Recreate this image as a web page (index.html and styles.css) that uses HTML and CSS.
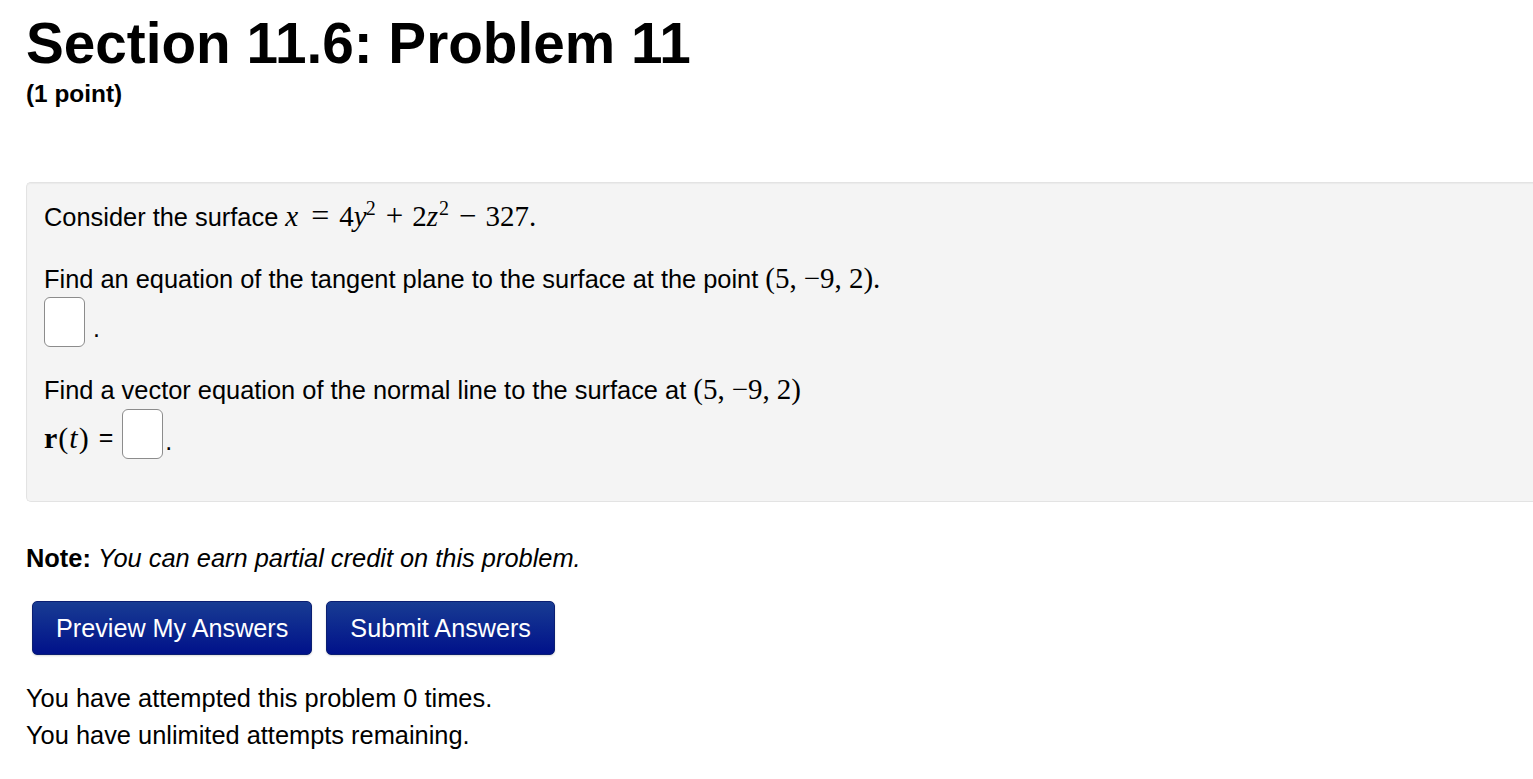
FILE: index.html
```html
<!DOCTYPE html>
<html lang="en">
<head>
<meta charset="utf-8">
<title>Section 11.6: Problem 11</title>
<link rel="stylesheet" href="styles.css">
</head>
<body>
<div class="page">
  <h1 class="title">Section 11.6: Problem 11</h1>
  <div class="points">(1 point)</div>

  <div class="problem">
    <p class="line">Consider the surface <span class="m"><i class="vx">x</i><span class="rel">=</span>4<i>y</i><span class="sup">2</span><span class="bin">+</span>2<i>z</i><span class="sup supz">2</span><span class="bin">−</span>327.</span></p>
    <p class="line gap">Find an equation of the tangent plane to the surface at the point <span class="m">(5,<span class="th"></span>−9,<span class="th"></span>2).</span></p>
    <div class="answer-row first">
      <span class="ans"></span><span class="dot">.</span>
    </div>
    <p class="line gap">Find a vector equation of the normal line to the surface at <span class="m">(5,<span class="th"></span>−9,<span class="th"></span>2)</span></p>
    <div class="answer-row second">
      <span class="m rt"><b>r</b>(<i>t</i>)</span><span class="eq">=</span><span class="ans"></span><span class="dot2">.</span>
    </div>
  </div>

  <p class="note"><b>Note:</b> <i>You can earn partial credit on this problem.</i></p>

  <div class="buttons">
    <button class="btn" type="button">Preview My Answers</button>
    <button class="btn" type="button">Submit Answers</button>
  </div>

  <div class="attempts">
    <p>You have attempted this problem 0 times.</p>
    <p>You have unlimited attempts remaining.</p>
  </div>
</div>
</body>
</html>
```
FILE: styles.css
```css
html, body {
  margin: 0;
  padding: 0;
  background: #ffffff;
  overflow-x: hidden;
}

body {
  font-family: "Liberation Sans", Arial, Helvetica, sans-serif;
  color: #000000;
}

.page {
  padding: 13px 0 0 26px;
}

.title {
  margin: 0;
  font-size: 56.7px;
  font-weight: 700;
  line-height: 62px;
}

.points {
  margin-top: 4px;
  font-size: 24.4px;
  font-weight: 700;
  line-height: 29px;
}

.problem {
  margin-top: 74px;
  margin-right: -20px;
  background: #f4f4f4;
  border: 1px solid #e3e3e3;
  border-right: none;
  border-radius: 5px 0 0 5px;
  box-shadow: inset 0 1px 1px rgba(0, 0, 0, 0.04);
  padding: 16px 0 42px 17px;
  font-size: 25.4px;
  line-height: 37px;
}

.line {
  margin: 0;
}

.line.gap {
  margin-top: 25px;
}

.m {
  font-family: "Liberation Serif", "Times New Roman", serif;
  font-size: 29px;
  line-height: 20px;
}

.m i {
  font-style: italic;
}

.m .vx {
  margin-right: 2px;
}

.m .rel {
  font-size: 32px;
  margin: 0 10px 0 11px;
}

.m .bin {
  font-size: 31px;
  margin: 0 9px 0 10px;
}

.m .sup {
  font-size: 20px;
  position: relative;
  top: -11px;
  margin-left: -1px;
}

.m .supz {
  margin-left: 1px;
}

.m .th {
  display: inline-block;
  width: 7px;
}

.answer-row {
  display: flex;
  align-items: center;
  height: 50px;
}

.answer-row.first {
  margin-top: -1px;
}

.ans {
  display: block;
  width: 39px;
  height: 48px;
  background: #ffffff;
  border: 1px solid #8c8c8c;
  border-radius: 6px;
}

.dot {
  margin-left: 8px;
  font-size: 25px;
  line-height: 25px;
  position: relative;
  top: 6px;
}

.rt {
  position: relative;
  top: 4px;
  font-size: 30px;
  line-height: 30px;
  letter-spacing: 1px;
}

.rt b {
  font-weight: 700;
}

.eq {
  font-size: 25px;
  line-height: 25px;
  margin: 0 9px 0 9px;
  position: relative;
  top: 3px;
}

.dot2 {
  margin-left: 2px;
  font-size: 25px;
  line-height: 25px;
  position: relative;
  top: 7px;
}

.note {
  margin: 38px 0 0 0;
  font-size: 25.4px;
  line-height: 37px;
}

.note b {
  font-weight: 700;
}

.buttons {
  display: flex;
  gap: 14px;
  margin-top: 24px;
  padding-left: 6px;
}

.btn {
  height: 54px;
  padding: 0 23px;
  font-family: "Liberation Sans", Arial, Helvetica, sans-serif;
  font-size: 25.2px;
  color: #ffffff;
  background: linear-gradient(to bottom, #183c93, #00118a);
  border: 1px solid #0b1f72;
  border-radius: 5px;
  box-shadow: 0 1px 2px rgba(0, 0, 0, 0.15);
  cursor: pointer;
}

.attempts {
  margin-top: 25px;
  font-size: 25.4px;
  line-height: 37px;
}

.attempts p {
  margin: 0;
}
```
